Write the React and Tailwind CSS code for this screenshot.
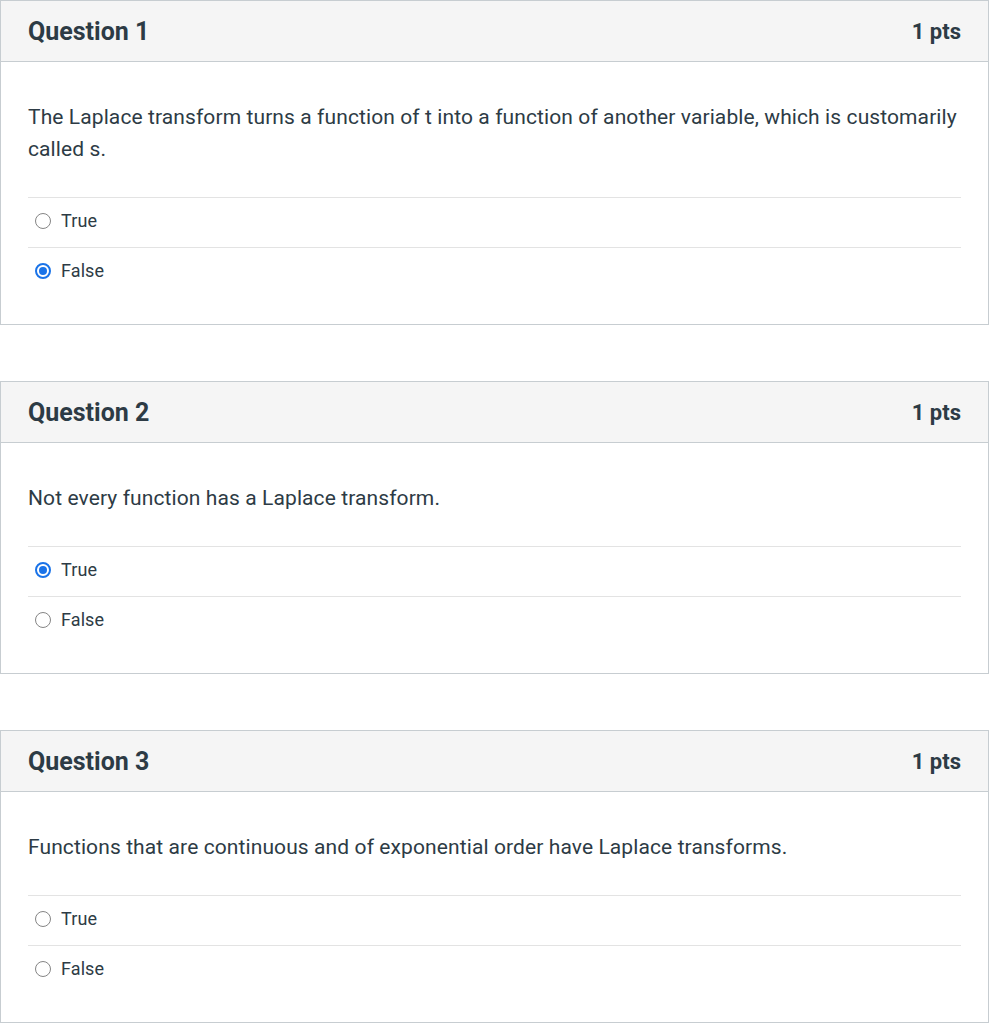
import React from "react";

const questions = [
  {
    n: 1,
    text: "The Laplace transform turns a function of t into a function of another variable, which is customarily called s.",
    selected: "False",
  },
  { n: 2, text: "Not every function has a Laplace transform.", selected: "True" },
  {
    n: 3,
    text: "Functions that are continuous and of exponential order have Laplace transforms.",
    selected: null,
  },
];

function Radio({ checked }) {
  if (checked) {
    return (
      <span className="flex h-[16px] w-[16px] shrink-0 items-center justify-center rounded-full border-[2px] border-[#1a73e8] bg-white">
        <span className="h-[8px] w-[8px] rounded-full bg-[#1a73e8]" />
      </span>
    );
  }
  return <span className="h-[16px] w-[16px] shrink-0 rounded-full border-[1.5px] border-[#858585] bg-white" />;
}

function Card({ q }) {
  return (
    <div className="w-[989px] border border-[#c7cdd1] bg-white">
      <div className="flex h-[61px] items-center justify-between border-b border-[#c7cdd1] bg-[#f5f5f5] px-[27px] pt-[1px]">
        <span className="text-[25px] font-bold text-[#2d3b45]">Question {q.n}</span>
        <span className="text-[22px] font-bold text-[#2d3b45]">1 pts</span>
      </div>
      <div className="px-[27px] pb-[27px] pt-[39px]">
        <p className="text-[21px] leading-[32px] tracking-[0.1px] text-[#2d3b45]">{q.text}</p>
        <div className="mt-[32px]">
          {["True", "False"].map((a) => (
            <div key={a} className="flex h-[50px] items-center gap-[10px] border-t border-[#e3e3e3] pl-[7px] pb-[4px]">
              <Radio checked={q.selected === a} />
              <span className="text-[18px] tracking-[0.1px] text-[#2d3b45]">{a}</span>
            </div>
          ))}
        </div>
      </div>
    </div>
  );
}

export default function App() {
  return (
    <div className="flex min-h-[1024px] w-[992px] flex-col gap-[56px] bg-white" style={{ fontFamily: "Roboto, 'Liberation Sans', sans-serif" }}>
      {questions.map((q) => (
        <Card key={q.n} q={q} />
      ))}
    </div>
  );
}
